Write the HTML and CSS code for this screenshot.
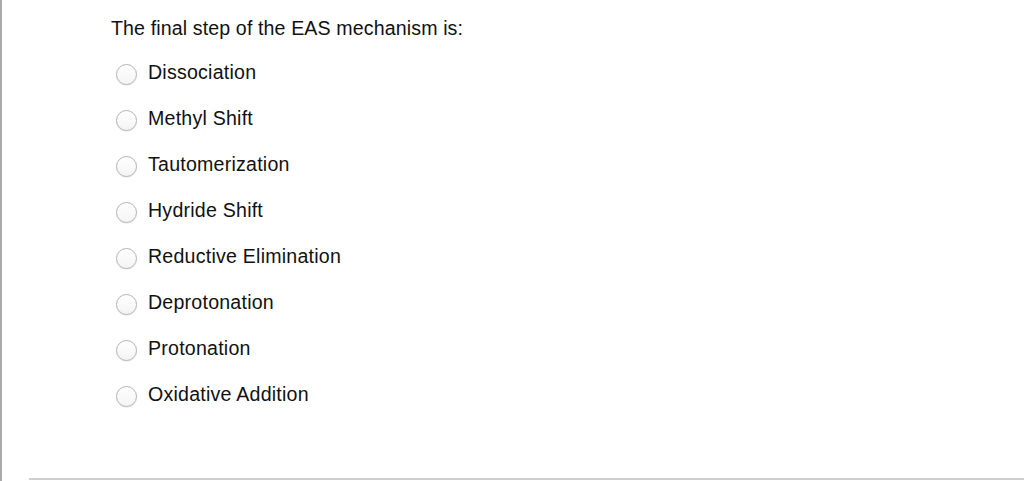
FILE: index.html
```html
<!DOCTYPE html>
<html>
<head>
<meta charset="utf-8">
<link rel="stylesheet" href="styles.css">
</head>
<body>
<div class="page">
  <div class="question">
    <p class="prompt">The final step of the EAS mechanism is:</p>
    <ul class="options">
      <li class="option"><span class="radio"></span><span class="label">Dissociation</span></li>
      <li class="option"><span class="radio"></span><span class="label">Methyl Shift</span></li>
      <li class="option"><span class="radio"></span><span class="label">Tautomerization</span></li>
      <li class="option"><span class="radio"></span><span class="label">Hydride Shift</span></li>
      <li class="option"><span class="radio"></span><span class="label">Reductive Elimination</span></li>
      <li class="option"><span class="radio"></span><span class="label">Deprotonation</span></li>
      <li class="option"><span class="radio"></span><span class="label">Protonation</span></li>
      <li class="option"><span class="radio"></span><span class="label">Oxidative Addition</span></li>
    </ul>
  </div>
  <div class="rule"></div>
</div>
</body>
</html>
```
FILE: styles.css
```css
html, body {
  margin: 0;
  padding: 0;
  background: #fff;
}
body {
  font-family: "Liberation Sans", Arial, sans-serif;
  color: #111;
}
.page {
  height: 481px;
  box-sizing: border-box;
  border-left: 2px solid #a9a9a9;
  display: flex;
  flex-direction: column;
}
.question {
  padding-left: 109px;
  padding-top: 17px;
}
.prompt {
  margin: 0;
  font-size: 19.6px;
  letter-spacing: 0.12px;
  line-height: 22px;
}
.options {
  list-style: none;
  margin: 22px 0 0 0;
  padding: 0;
  display: flex;
  flex-direction: column;
  gap: 24px;
}
.option {
  display: flex;
  align-items: center;
  height: 22px;
  font-size: 19.6px;
  letter-spacing: 0.22px;
  line-height: 22px;
}
.radio {
  box-sizing: border-box;
  width: 21px;
  height: 21px;
  margin-left: 5px;
  margin-top: 5px;
  border-radius: 50%;
  border: 1px solid #b4b4b4;
  background: linear-gradient(#ffffff, #f4f4f4);
  box-shadow: 0 0.5px 1px rgba(0,0,0,0.12);
  flex: none;
}
.label {
  margin-left: 11px;
}
.rule {
  margin-top: auto;
  margin-left: 27px;
  height: 2px;
  margin-bottom: 1px;
  background: #cfcfcf;
}
```
